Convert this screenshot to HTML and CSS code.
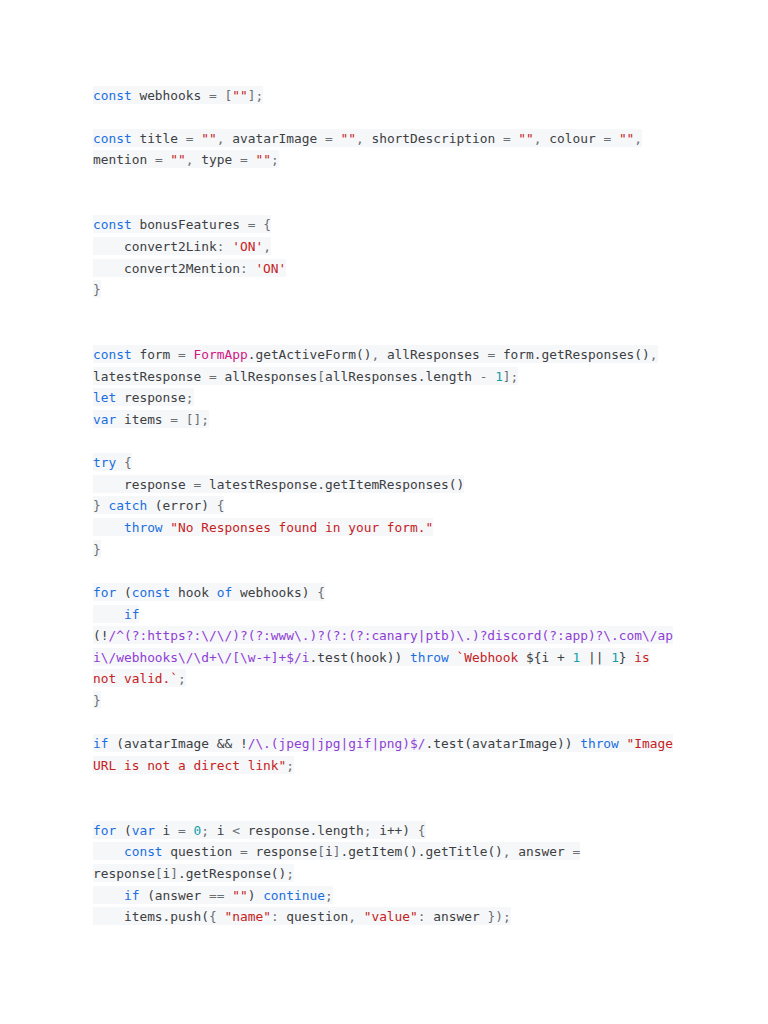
FILE: index.html
```html
<!DOCTYPE html>
<html>
<head>
<meta charset="utf-8">
<link rel="stylesheet" href="styles.css">
</head>
<body>
<main class="code">
<div class="ln"><span class="t"><span class="k">const</span> webhooks <span class="p">=</span> <span class="p">[</span><span class="s">""</span><span class="p">];</span></span></div>
<div class="ln"></div>
<div class="ln"><span class="t"><span class="k">const</span> title <span class="p">=</span> <span class="s">""</span><span class="p">,</span> avatarImage <span class="p">=</span> <span class="s">""</span><span class="p">,</span> shortDescription <span class="p">=</span> <span class="s">""</span><span class="p">,</span> colour <span class="p">=</span> <span class="s">""</span><span class="p">,</span></span></div>
<div class="ln"><span class="t">mention <span class="p">=</span> <span class="s">""</span><span class="p">,</span> type <span class="p">=</span> <span class="s">""</span><span class="p">;</span></span></div>
<div class="ln"></div>
<div class="ln"></div>
<div class="ln"><span class="t"><span class="k">const</span> bonusFeatures <span class="p">=</span> <span class="p">{</span></span></div>
<div class="ln"><span class="t">    convert2Link<span class="p">:</span> <span class="s">'ON'</span><span class="p">,</span></span></div>
<div class="ln"><span class="t">    convert2Mention<span class="p">:</span> <span class="s">'ON'</span></span></div>
<div class="ln"><span class="t"><span class="p">}</span></span></div>
<div class="ln"></div>
<div class="ln"></div>
<div class="ln"><span class="t"><span class="k">const</span> form <span class="p">=</span> <span class="c">FormApp</span>.getActiveForm()<span class="p">,</span> allResponses <span class="p">=</span> form.getResponses()<span class="p">,</span></span></div>
<div class="ln"><span class="t">latestResponse <span class="p">=</span> allResponses<span class="p">[</span>allResponses.length <span class="p">-</span> <span class="n">1</span><span class="p">];</span></span></div>
<div class="ln"><span class="t"><span class="k">let</span> response<span class="p">;</span></span></div>
<div class="ln"><span class="t"><span class="k">var</span> items <span class="p">=</span> <span class="p">[];</span></span></div>
<div class="ln"></div>
<div class="ln"><span class="t"><span class="k">try</span> <span class="p">{</span></span></div>
<div class="ln"><span class="t">    response <span class="p">=</span> latestResponse.getItemResponses()</span></div>
<div class="ln"><span class="t"><span class="p">}</span> <span class="k">catch</span> (error) <span class="p">{</span></span></div>
<div class="ln"><span class="t">    <span class="k">throw</span> <span class="s">"No Responses found in your form."</span></span></div>
<div class="ln"><span class="t"><span class="p">}</span></span></div>
<div class="ln"></div>
<div class="ln"><span class="t"><span class="k">for</span> (<span class="k">const</span> hook <span class="k">of</span> webhooks) <span class="p">{</span></span></div>
<div class="ln"><span class="t">    <span class="k">if</span></span></div>
<div class="ln"><span class="t">(!<span class="r">/^(?:https?:\/\/)?(?:www\.)?(?:(?:canary|ptb)\.)?discord(?:app)?\.com\/ap</span></span></div>
<div class="ln"><span class="t"><span class="r">i\/webhooks\/\d+\/[\w-+]+$/i</span>.test(hook)) <span class="k">throw</span> <span class="s">`Webhook </span>${i + <span class="n">1</span> || <span class="n">1</span>}<span class="s"> is</span></span></div>
<div class="ln"><span class="t"><span class="s">not valid.`</span><span class="p">;</span></span></div>
<div class="ln"><span class="t"><span class="p">}</span></span></div>
<div class="ln"></div>
<div class="ln"><span class="t"><span class="k">if</span> (avatarImage &amp;&amp; !<span class="r">/\.(jpeg|jpg|gif|png)$/</span>.test(avatarImage)) <span class="k">throw</span> <span class="s">"Image</span></span></div>
<div class="ln"><span class="t"><span class="s">URL is not a direct link"</span><span class="p">;</span></span></div>
<div class="ln"></div>
<div class="ln"></div>
<div class="ln"><span class="t"><span class="k">for</span> (<span class="k">var</span> i <span class="p">=</span> <span class="n">0</span><span class="p">;</span> i <span class="p">&lt;</span> response.length<span class="p">;</span> i++) <span class="p">{</span></span></div>
<div class="ln"><span class="t">    <span class="k">const</span> question <span class="p">=</span> response<span class="p">[</span>i<span class="p">]</span>.getItem().getTitle()<span class="p">,</span> answer <span class="p">=</span></span></div>
<div class="ln"><span class="t">response<span class="p">[</span>i<span class="p">]</span>.getResponse()<span class="p">;</span></span></div>
<div class="ln"><span class="t">    <span class="k">if</span> (answer <span class="p">==</span> <span class="s">""</span>) <span class="k">continue</span><span class="p">;</span></span></div>
<div class="ln"><span class="t">    items.push(<span class="p">{</span> <span class="s">"name"</span><span class="p">:</span> question<span class="p">,</span> <span class="s">"value"</span><span class="p">:</span> answer <span class="p">});</span></span></div>
</main>
</body>
</html>
```

FILE: styles.css
```css
html, body {
  margin: 0;
  padding: 0;
  background: #ffffff;
}

.code {
  padding: 84px 0 0 93px;
  font-family: "DejaVu Sans Mono", "Liberation Mono", monospace;
  font-size: 12.85px;
  color: #3c4043;
}

.ln {
  height: 21.64px;
  line-height: 21.64px;
  white-space: pre;
}

.t {
  background: #f6f7f8;
  padding: 1.5px 0;
}

.k { color: #1a6fe0; }
.s { color: #c5221f; }
.r { color: #8e3ed6; }
.n { color: #12a0a8; }
.c { color: #d01884; }
.p { color: #6b6f73; }
```
